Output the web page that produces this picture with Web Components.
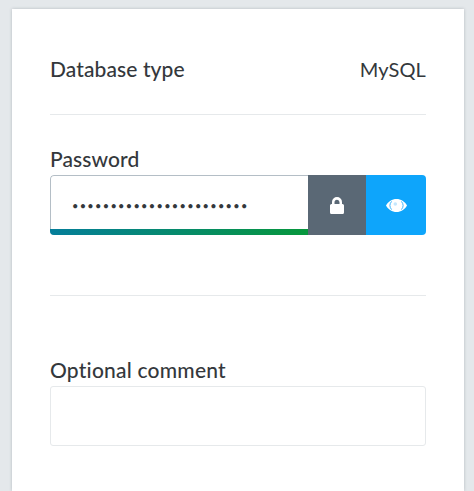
<!DOCTYPE html>
<html><head><meta charset="utf-8"><title>Database</title>
<style>html,body{margin:0;height:100%;overflow:hidden}body{background:#e4e8eb;font-family:Lato,"Open Sans",sans-serif;color:#34383c}</style></head>
<body>
<db-card>
  <info-row label="Database type" value="MySQL"></info-row>
  <password-field label="Password" value="•••••••••••••••••••••••"></password-field>
  <comment-field label="Optional comment"></comment-field>
</db-card>
<script>
function def(name, html, init){
  customElements.define(name, class extends HTMLElement{
    connectedCallback(){
      if(this.shadowRoot) return;
      const r=this.attachShadow({mode:'open'});
      r.innerHTML=html;
      if(init) init(this,r);
    }
  });
}
def('db-card',`<style>
:host{display:flex;flex-direction:column;box-sizing:border-box;margin:9px 10px 0 12px;height:482px;padding:0 38px;background:#fff;box-shadow:0 0 3px rgba(60,70,80,.28)}
</style><slot></slot>`);
def('info-row',`<style>
:host{display:flex;justify-content:space-between;align-items:center;height:106px;padding-top:15px;box-sizing:border-box;border-bottom:1px solid #e6e9eb;line-height:24px;color:#34383c}
.l{font-size:21px;font-weight:500;letter-spacing:.1px}.v{font-size:20px;letter-spacing:.1px}
</style><span class="l"></span><span class="v"></span>`,(h,r)=>{r.querySelector('.l').textContent=h.getAttribute('label');r.querySelector('.v').textContent=h.getAttribute('value')});
def('password-field',`<style>
:host{display:block;box-sizing:border-box;height:181px;padding-top:32px;border-bottom:1px solid #e6e9eb}
.lab{display:block;font-size:21px;line-height:24px;font-weight:500;letter-spacing:.1px;margin-bottom:4px}
.box{display:flex;height:60px;border-radius:4px;overflow:hidden}
.in{flex:1;min-width:0;position:relative;box-sizing:border-box;border:1px solid #b4bec6;border-right:0;border-radius:4px 0 0 4px;padding:0 0 0 21px;display:flex;align-items:center;font-size:11px;letter-spacing:1.3px;color:#34383c}
.bar{position:absolute;left:-1px;right:0;bottom:-1px;height:6px;background:linear-gradient(90deg,#057e9a,#07973c)}
.btn{display:flex;align-items:center;justify-content:center}
.lock{width:58px;background:#5a6875}.eye{width:60px;background:#0ea5fb}
</style><span class="lab"></span><div class="box"><div class="in"><span class="val"></span><span class="bar"></span></div>
<div class="btn lock"><svg width="14" height="17" viewBox="0 0 14 17"><path fill="#fff" fill-rule="evenodd" d="M1.500 7H2V5a5 5 0 0 1 10 0v2h.5A1.500 1.500 0 0 1 14 8.500v7a1.500 1.500 0 0 1-1.500 1.500h-11A1.500 1.500 0 0 1 0 15.500v-7A1.500 1.500 0 0 1 1.500 7zM4.500 7h5V5.200a2.500 2.500 0 0 0-5 0z"/></svg></div>
<div class="btn eye"><svg width="21" height="13" viewBox="0 0 21 13"><path fill="#fff" d="M10.500 0C6 0 2.300 2.500 0 6.500 2.300 10.500 6 13 10.500 13S18.700 10.500 21 6.500C18.700 2.500 15 0 10.500 0z"/><path fill="none" stroke="#0ea5fb" stroke-width=".8" d="M5.600 2.400a6.400 6.400 0 0 0 0 8.200M15.400 2.400a6.400 6.400 0 0 1 0 8.200"/><circle cx="9.300" cy="5" r="1.800" fill="#c4e7fd"/></svg></div></div>`,(h,r)=>{r.querySelector('.lab').textContent=h.getAttribute('label');r.querySelector('.val').textContent=h.getAttribute('value')});
def('comment-field',`<style>
:host{display:block;padding-top:62px}
.lab{display:block;font-size:21px;line-height:24px;font-weight:500;letter-spacing:.22px;margin-bottom:4px}
.ta{height:60px;box-sizing:border-box;border:1px solid #e6e9eb;border-radius:3px}
</style><span class="lab"></span><div class="ta"></div>`,(h,r)=>{r.querySelector('.lab').textContent=h.getAttribute('label')});
</script>
</body></html>
